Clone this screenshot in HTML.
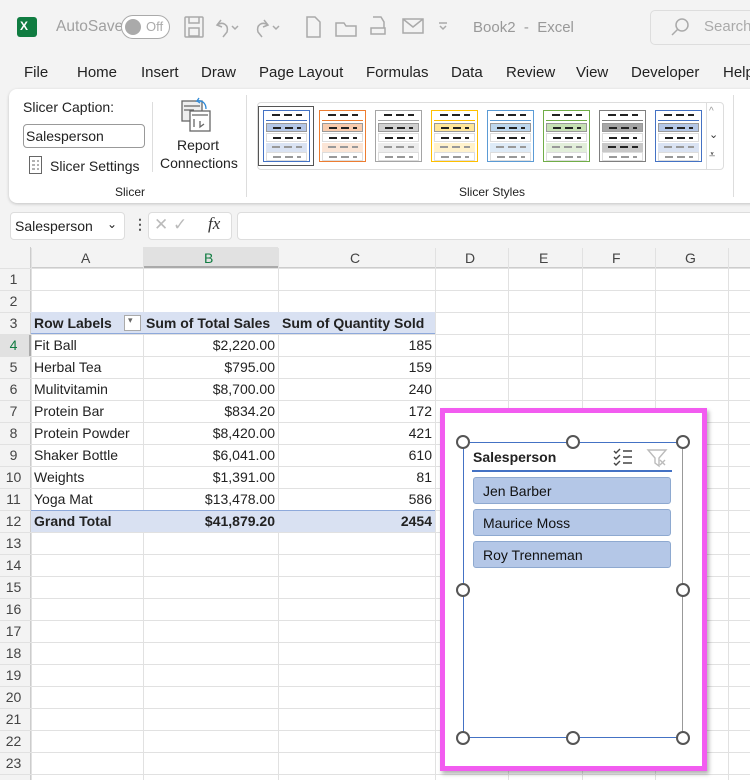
<!DOCTYPE html>
<html><head><meta charset="utf-8">
<style>
*{margin:0;padding:0;box-sizing:border-box}
body{width:750px;height:780px;overflow:hidden;background:#f3f3f3;font-family:"Liberation Sans",sans-serif;position:relative;color:#222}
.a{position:absolute}
.t{position:absolute;white-space:nowrap}
.th{position:absolute;width:47px;height:52px;background:#fff;border:1.5px solid}
.th div{position:absolute;left:2px;right:2px;height:9px;border-top:0}
.th i{position:absolute;left:6px;right:5px;top:3px;height:2px;background:repeating-linear-gradient(90deg,#222 0 8px,transparent 8px 12px)}
.th i.g{background:repeating-linear-gradient(90deg,#999 0 8px,transparent 8px 12px)}
.cell{position:absolute;font-size:14px;height:22px;line-height:22px;white-space:nowrap}
.r{text-align:right}
.h{position:absolute;width:14px;height:14px;border:2px solid #555;border-radius:50%;background:#fff}
.it{position:absolute;left:473px;width:198px;height:27px;background:#b4c7e7;border:1px solid #8ea9d0;border-radius:3px;font-size:14px;line-height:26px;padding-left:9px;color:#111}
</style></head><body>
<!-- title bar -->
<div class="a" style="left:17px;top:17px;width:20px;height:20px;background:#107c41;border-radius:3px"></div>
<div class="t" style="left:20px;top:19px;color:#fff;font-size:12px;font-weight:bold">X</div>
<div class="t" style="left:56px;top:18px;font-size:15.5px;color:#a0a0a0">AutoSave</div>
<div class="a" style="left:121px;top:15px;width:49px;height:24px;border:1.5px solid #aaa;border-radius:12px;background:#fff"></div>
<div class="a" style="left:125px;top:19px;width:16px;height:16px;border-radius:50%;background:#aaa"></div>
<div class="t" style="left:146px;top:19px;font-size:13px;color:#aaa">Off</div>
<svg class="a" style="left:183px;top:14px" width="300" height="28" fill="none" stroke="#aaa" stroke-width="1.5">
<rect x="2" y="3" width="18" height="20" rx="1"/><rect x="6" y="14" width="10" height="8"/><path d="M6 3v6h10V3"/>
<path d="M38 6l-4 5 5 2M34 11c6-4 12 0 10 7l-4 5"/><path d="M49 12l3 3 3-3"/>
<path d="M81 6l4 5-5 2M85 11c-6-4-12 0-10 7l4 5"/><path d="M90 12l3 3 3-3"/>
<path d="M124 3h8l5 5v15h-13z"/>
<path d="M153 9h8l2 3h10v10h-20z"/>
<path d="M190 3h8l3 5v6M188 14h14v6h-14z"/>
<path d="M220 5h20v14h-20zM220 5l10 8 10-8"/>
<path d="M257 12l3 3 3-3M256 9h8"/>
</svg>
<div class="t" style="left:473px;top:19px;font-size:15px;color:#999">Book2&nbsp; -&nbsp; Excel</div>
<div class="a" style="left:650px;top:10px;width:120px;height:35px;border:1.5px solid #ddd;border-radius:5px;background:#f3f3f3"></div>
<svg class="a" style="left:670px;top:17px" width="20" height="20" fill="none" stroke="#aaa" stroke-width="1.5"><circle cx="12" cy="8" r="6"/><path d="M8 12l-6 6"/></svg>
<div class="t" style="left:704px;top:18px;font-size:15px;color:#aaa">Search</div>
<!-- menu -->
<div class="t" style="top:64px;font-size:15px;color:#222;left:24px">File</div>
<div class="t" style="top:64px;font-size:15px;left:77px">Home</div>
<div class="t" style="top:64px;font-size:15px;left:141px">Insert</div>
<div class="t" style="top:64px;font-size:15px;left:201px">Draw</div>
<div class="t" style="top:64px;font-size:15px;left:259px">Page Layout</div>
<div class="t" style="top:64px;font-size:15px;left:366px">Formulas</div>
<div class="t" style="top:64px;font-size:15px;left:451px">Data</div>
<div class="t" style="top:64px;font-size:15px;left:506px">Review</div>
<div class="t" style="top:64px;font-size:15px;left:576px">View</div>
<div class="t" style="top:64px;font-size:15px;left:631px">Developer</div>
<div class="t" style="top:64px;font-size:15px;left:723px">Help</div>
<!-- ribbon -->
<div class="a" style="left:9px;top:89px;width:760px;height:114px;background:#fff;border-radius:8px;box-shadow:0 1px 3px rgba(0,0,0,.2)"></div>
<div class="t" style="left:23px;top:99px;font-size:14px">Slicer Caption:</div>
<div class="a" style="left:23px;top:124px;width:122px;height:24px;border:1px solid #999;border-radius:4px"></div>
<div class="t" style="left:26px;top:128px;font-size:14px">Salesperson</div>
<svg class="a" style="left:28px;top:155px" width="16" height="20" fill="none" stroke="#666"><rect x="1.5" y="1.5" width="12" height="17"/><path d="M4 6h3M9 6h2M4 10h3M9 10h2M4 14h3M9 14h2"/></svg>
<div class="t" style="left:50px;top:158px;font-size:14px">Slicer Settings</div>
<div class="a" style="left:152px;top:102px;width:1px;height:70px;background:#ddd"></div>
<svg class="a" style="left:180px;top:97px" width="40" height="36" fill="none" stroke="#666" stroke-width="1.3"><rect x="2" y="4" width="20" height="20" fill="#eee"/><path d="M4 9h16M4 13h10"/><rect x="10" y="14" width="20" height="20" fill="#fff"/><path d="M12 18h16M14 22v8M20 24v6l4-3"/><path d="M26 12c0-6-4-9-9-8l2-3M17 4l3 2" stroke="#2f8ad8"/></svg>
<div class="t" style="left:177px;top:137px;font-size:14px">Report</div>
<div class="t" style="left:160px;top:155px;font-size:14px">Connections</div>
<div class="t" style="left:115px;top:185px;font-size:12px">Slicer</div>
<div class="a" style="left:246px;top:95px;width:1px;height:102px;background:#ddd"></div>
<div class="a" style="left:257px;top:102px;width:467px;height:68px;border:1px solid #ddd;border-radius:4px"></div>
<div class="a" style="left:258px;top:106px;width:56px;height:60px;border:1.5px solid #555"></div>
<div class="a" style="left:706px;top:102px;width:1px;height:68px;background:#ddd"></div>
<div class="t" style="left:709px;top:106px;font-size:10px;color:#999">^</div>
<div class="t" style="left:709px;top:128px;font-size:11px;color:#333">⌄</div>
<div class="t" style="left:709px;top:149px;font-size:11px;color:#333">⩡</div>
<div class="t" style="left:459px;top:185px;font-size:12px">Slicer Styles</div>
<div class="a" style="left:733px;top:95px;width:1px;height:102px;background:#ddd"></div>

<div id="thumbs"></div>
<script>
var cols=[["#4472c4","#b4c7e7","#dae3f3"],["#ed7d31","#f8cbad","#fbe5d6"],["#a5a5a5","#d0d0d0","#ededed"],["#ffc000","#ffe699","#fff2cc"],["#5b9bd5","#bdd7ee","#deebf7"],["#70ad47","#c6e0b4","#e2efda"],["#7f7f7f","#a6a6a6","#d0d0d0"],["#4472c4","#b4c7e7","#dae3f3"]];
var h="";
for(var k=0;k<8;k++){var c=cols[k];var x=263+k*56;
h+='<div class="th" style="left:'+x+'px;top:110px;border-color:'+c[0]+'">'+
'<div style="top:0;height:10px;border-bottom:1.5px solid '+c[0]+'"><i></i></div>'+
'<div style="top:12px;background:'+c[1]+';border:1px solid #999"><i></i></div>'+
'<div style="top:22px;border:1px solid #ddd"><i></i></div>'+
'<div style="top:32px;background:'+(k==6?'#c8c8c8':c[2])+'"><i class="'+(k==6?'':'g')+'"></i></div>'+
'<div style="top:41px;border:1px solid #ddd"><i class="g"></i></div></div>';}
document.getElementById("thumbs").innerHTML=h;
</script>

<!-- formula bar -->
<div class="a" style="left:10px;top:212px;width:115px;height:28px;background:#fff;border:1px solid #ddd;border-radius:4px"></div>
<div class="t" style="left:15px;top:218px;font-size:14px">Salesperson</div>
<div class="t" style="left:107px;top:217px;font-size:12px">⌄</div>
<div class="t" style="left:133px;top:216px;font-size:14px;font-weight:bold;color:#555">⋮</div>
<div class="a" style="left:148px;top:212px;width:84px;height:28px;background:#fff;border:1px solid #ddd;border-radius:4px"></div>
<div class="t" style="left:154px;top:215px;font-size:17px;color:#bbb">✕&nbsp;✓</div>
<div class="t" style="left:208px;top:214px;font-size:17px;font-style:italic;font-family:'Liberation Serif',serif;color:#333">fx</div>
<div class="a" style="left:237px;top:212px;width:530px;height:28px;background:#fff;border:1px solid #ddd;border-radius:4px"></div>

<!-- grid -->
<div class="a" style="left:0;top:247px;width:750px;height:533px;background:#fff"></div>
<div class="a" style="left:0;top:247px;width:750px;height:21px;background:#f3f3f3;border-bottom:1px solid #ccc"></div>
<div class="a" style="left:0;top:247px;width:31px;height:533px;background:#f3f3f3;border-right:1px solid #ccc"></div>
<div class="a" style="left:143px;top:247px;width:135px;height:21px;background:#e1e1e1;border-bottom:2px solid #aaa"></div>
<div class="a" style="left:0;top:334px;width:31px;height:22px;background:#e1e1e1;border-right:2px solid #aaa"></div>
<svg class="a" style="left:0;top:0" width="750" height="780" id="g"></svg>
<script>
var s="";var xs=[31,143,278,435,508,582,655,728];
for(var i=0;i<xs.length;i++){s+='<line x1="'+(xs[i]+.5)+'" y1="248" x2="'+(xs[i]+.5)+'" y2="780" stroke="#e1e1e1"/>';}
for(var r=0;r<=23;r++){var y=268+r*22+.5;s+='<line x1="0" y1="'+y+'" x2="750" y2="'+y+'" stroke="#e1e1e1"/>';}
document.getElementById("g").innerHTML=s;
var L=["A","B","C","D","E","F","G"],c=[87,210,356,471,545,618,691];var h2="";
for(var i=0;i<7;i++)h2+='<div class="t" style="left:'+(c[i]-6)+'px;top:250px;font-size:14px;color:'+(i==1?'#107c41':'#444')+'">'+L[i]+'</div>';
for(var r=1;r<=23;r++)h2+='<div class="t" style="left:0;width:27px;text-align:center;top:'+(268+(r-1)*22+3)+'px;font-size:14px;color:'+(r==4?'#107c41':'#444')+'">'+r+'</div>';
document.body.insertAdjacentHTML("beforeend",h2);
</script>
<div class="a" style="left:31px;top:312px;width:404px;height:22px;background:#d9e1f2;border-bottom:1px solid #8ea9db"></div>
<div class="a" style="left:31px;top:510px;width:404px;height:22px;background:#d9e1f2;border-top:1px solid #8ea9db"></div>
<div class="a" style="left:124px;top:315px;width:17px;height:16px;background:#fff;border:1px solid #aaa"></div>
<div class="t" style="left:128px;top:315px;font-size:9px;color:#666">▾</div>
<div class="cell" style="left:34px;top:312px;font-weight:bold">Row Labels</div>
<div class="cell" style="left:146px;top:312px;font-weight:bold">Sum of Total Sales</div>
<div class="cell" style="left:282px;top:312px;font-weight:bold">Sum of Quantity Sold</div>
<div id="d"></div>
<script>
var rows=[["Fit Ball","$2,220.00","185"],["Herbal Tea","$795.00","159"],["Mulitvitamin","$8,700.00","240"],["Protein Bar","$834.20","172"],["Protein Powder","$8,420.00","421"],["Shaker Bottle","$6,041.00","610"],["Weights","$1,391.00","81"],["Yoga Mat","$13,478.00","586"],["Grand Total","$41,879.20","2454"]];
var q="";for(var i=0;i<rows.length;i++){var y=334+i*22;var b=i==8?'font-weight:bold;':'';
q+='<div class="cell" style="'+b+'left:34px;top:'+y+'px">'+rows[i][0]+'</div><div class="cell r" style="'+b+'left:143px;width:132px;top:'+y+'px">'+rows[i][1]+'</div><div class="cell r" style="'+b+'left:278px;width:154px;top:'+y+'px">'+rows[i][2]+'</div>';}
document.getElementById("d").innerHTML=q;
</script>

<!-- slicer -->
<div class="a" style="left:440px;top:408px;width:267px;height:363px;background:#fff;border:5px solid #f25cf0;box-shadow:2px 3px 4px rgba(0,0,0,.3)"></div>
<div class="a" style="left:463px;top:442px;width:220px;height:296px;border:1.5px solid #4472c4;border-right-color:#999"></div>
<div class="t" style="left:473px;top:449px;font-size:14px;font-weight:bold">Salesperson</div>
<svg class="a" style="left:612px;top:446px" width="60" height="22" fill="none" stroke="#444" stroke-width="1.4"><path d="M2 5l2 2 4-4M2 11l2 2 4-4M2 17l2 2 4-4M11 5h9M11 11h9M11 17h9"/><path d="M36 4h18l-7 8v8l-4-3v-5z" stroke="#bbb"/><path d="M48 14l5 5M53 14l-5 5" stroke="#bbb"/></svg>
<div class="a" style="left:472px;top:470px;width:200px;height:1.5px;background:#4472c4"></div>
<div class="it" style="top:477px">Jen Barber</div>
<div class="it" style="top:509px">Maurice Moss</div>
<div class="it" style="top:541px">Roy Trenneman</div>
<div class="h" style="left:456px;top:435px"></div>
<div class="h" style="left:566px;top:435px"></div>
<div class="h" style="left:676px;top:435px"></div>
<div class="h" style="left:456px;top:583px"></div>
<div class="h" style="left:676px;top:583px"></div>
<div class="h" style="left:456px;top:731px"></div>
<div class="h" style="left:566px;top:731px"></div>
<div class="h" style="left:676px;top:731px"></div>
</body></html>
